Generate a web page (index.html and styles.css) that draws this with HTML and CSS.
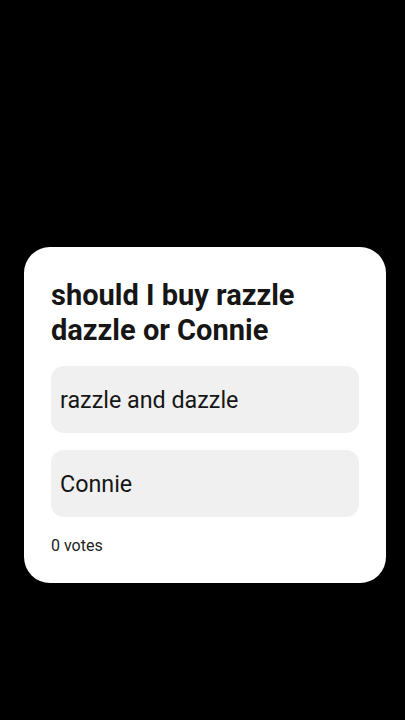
FILE: index.html
```html
<!DOCTYPE html>
<html>
<head>
  <title>Poll</title>
  <link rel="stylesheet" href="styles.css">
</head>
<body>
  <div class="screen">
    <div class="poll">
      <h2 class="question">should I buy razzle dazzle or Connie</h2>
      <div class="options">
        <div class="option">razzle and dazzle</div>
        <div class="option">Connie</div>
      </div>
      <div class="votes">0 votes</div>
    </div>
  </div>
</body>
</html>
```

FILE: styles.css
```css
body {
  background-color: #000;
  font-family: Roboto, "Noto Sans", sans-serif;
  margin: 0;
  padding: 0;
}

.screen {
  height: 720px;
  padding: 247px 19px 0 24px;
  box-sizing: border-box;
}

.poll {
  background: #fff;
  border-radius: 26px;
  padding: 31px 27px 28px 27px;
  height: 336px;
  box-sizing: border-box;
}

.question {
  margin: 0 0 18px 0;
  font-size: 29px;
  line-height: 35px;
  font-weight: 700;
  color: #161616;
}

.options {
  display: flex;
  flex-direction: column;
  gap: 17px;
}

.option {
  background: #f0f0f0;
  border-radius: 13px;
  height: 67px;
  padding: 0 9px;
  display: flex;
  align-items: center;
  font-size: 23.3px;
  color: #161616;
}

.votes {
  margin-top: 19px;
  font-size: 16px;
  color: #222;
}
```
